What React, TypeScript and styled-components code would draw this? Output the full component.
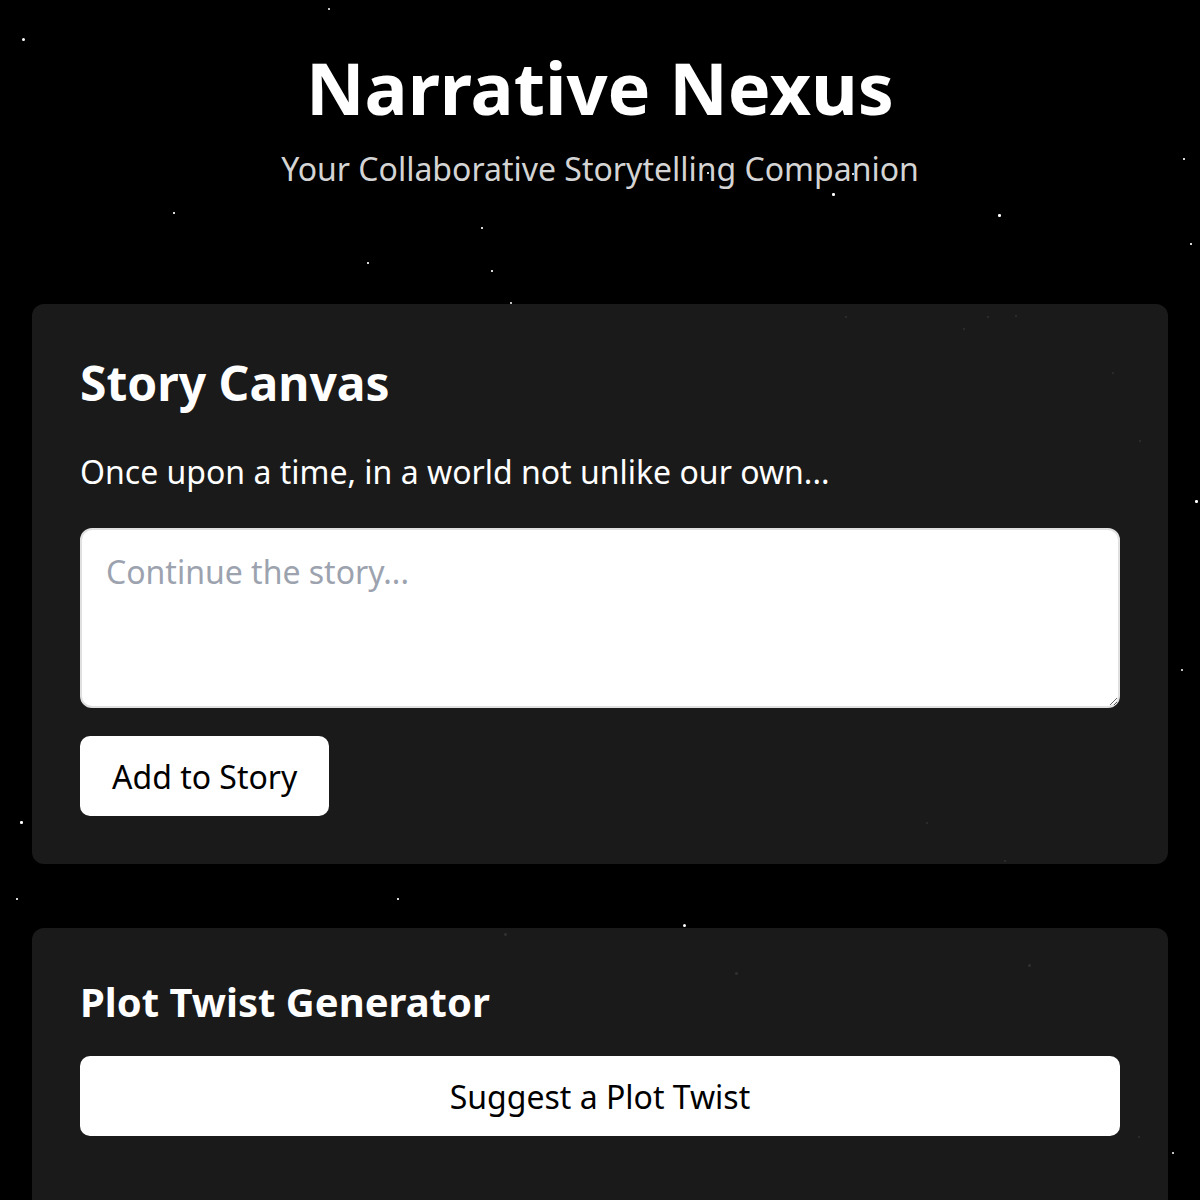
import React from 'react';
import styled, { createGlobalStyle } from 'styled-components';

const GlobalStyle = createGlobalStyle`
  html, body {
    margin: 0;
    padding: 0;
    background: #000;
    color: #fff;
    font-family: "Noto Sans", "Open Sans", sans-serif;
  }
  * {
    box-sizing: border-box;
  }
`;

type StarData = { x: number; y: number; s: number };

// scattered backdrop stars (x, y, size)
const stars: StarData[] = [
  { x: 22, y: 38, s: 3 },
  { x: 328, y: 8, s: 2 },
  { x: 173, y: 212, s: 1.5 },
  { x: 367, y: 262, s: 1.5 },
  { x: 481, y: 227, s: 1.5 },
  { x: 491, y: 270, s: 1.5 },
  { x: 510, y: 302, s: 2 },
  { x: 832, y: 193, s: 2.5 },
  { x: 852, y: 173, s: 1.5 },
  { x: 707, y: 172, s: 1.5 },
  { x: 998, y: 214, s: 2.5 },
  { x: 1183, y: 158, s: 1.5 },
  { x: 1190, y: 243, s: 1.5 },
  { x: 845, y: 316, s: 1.5 },
  { x: 963, y: 328, s: 1.5 },
  { x: 987, y: 316, s: 1.5 },
  { x: 1015, y: 315, s: 1.5 },
  { x: 1112, y: 372, s: 2 },
  { x: 1139, y: 440, s: 1.5 },
  { x: 1195, y: 500, s: 2.5 },
  { x: 1181, y: 669, s: 2 },
  { x: 926, y: 822, s: 1.5 },
  { x: 1004, y: 860, s: 1.5 },
  { x: 20, y: 821, s: 2.5 },
  { x: 16, y: 898, s: 1.5 },
  { x: 397, y: 898, s: 1.5 },
  { x: 683, y: 924, s: 3 },
  { x: 504, y: 933, s: 2.5 },
  { x: 735, y: 972, s: 2.5 },
  { x: 1028, y: 964, s: 2.5 },
  { x: 1138, y: 1136, s: 1.5 },
  { x: 1172, y: 1152, s: 2 },
];

const Page = styled.div`
  position: relative;
  min-height: 1200px;
  overflow: hidden;
  background: #000;
`;

const Sky = styled.div`
  position: absolute;
  inset: 0;
  z-index: 0;
  pointer-events: none;
`;

const Star = styled.span`
  position: absolute;
  border-radius: 50%;
  background: #fff;
`;

const Content = styled.main`
  position: relative;
  z-index: 1;
  display: flex;
  flex-direction: column;
  gap: 64px;
  padding: 44px 32px 64px;
`;

const Header = styled.header`
  display: flex;
  flex-direction: column;
  align-items: center;
  text-align: center;
  padding-bottom: 50px;
`;

const Title = styled.h1`
  margin: 0;
  font-size: 72px;
  font-weight: 700;
  line-height: 1.2;
  color: #fff;
`;

const Subtitle = styled.p`
  margin: 18px 0 0;
  font-size: 32px;
  line-height: 1.3;
  color: #d4d4d4;
`;

const Card = styled.section`
  display: flex;
  flex-direction: column;
  padding: 48px;
  border-radius: 12px;
  background: rgba(28, 28, 28, 0.92);
`;

const CardTitle = styled.h2<{ $small?: boolean }>`
  margin: 0 0 ${(p) => (p.$small ? '28px' : '34px')};
  font-size: ${(p) => (p.$small ? '40px' : '48px')};
  font-weight: 700;
  line-height: 1.3;
  color: #fff;
`;

const StoryText = styled.p`
  margin: 0 0 32px;
  font-size: 32px;
  line-height: 1.5;
  color: #fff;
`;

const StoryInput = styled.textarea`
  display: block;
  width: 100%;
  height: 180px;
  padding: 20px 24px;
  border: 2px solid #e0e0e0;
  border-radius: 12px;
  background: #fff;
  color: #111;
  font-family: "Noto Sans", "Open Sans", sans-serif;
  font-size: 32px;
  line-height: 1.4;
  resize: vertical;
  outline: none;

  &::placeholder {
    color: #9ca3af;
  }
`;

const Button = styled.button<{ $block?: boolean }>`
  align-self: ${(p) => (p.$block ? 'stretch' : 'flex-start')};
  height: 80px;
  padding: 0 32px;
  border: none;
  border-radius: 10px;
  background: #fff;
  color: #000;
  font-family: "Noto Sans", "Open Sans", sans-serif;
  font-size: 32px;
  cursor: pointer;
`;

const Actions = styled.div`
  display: flex;
  margin-top: 28px;
`;

// holds the suggested twist once one has been generated
const TwistOutput = styled.p`
  min-height: 48px;
  margin: 28px 0 0;
  font-size: 28px;
  line-height: 1.5;
  font-style: italic;
  color: #d4d4d4;
`;

function App() {
  const [draft, setDraft] = React.useState('');
  const [twist, setTwist] = React.useState('');

  return (
    <Page>
      <GlobalStyle />
      <Sky>
        {stars.map((st, i) => (
          <Star
            key={i}
            style={{ left: st.x, top: st.y, width: st.s, height: st.s }}
          />
        ))}
      </Sky>
      <Content>
        <Header>
          <Title>Narrative Nexus</Title>
          <Subtitle>Your Collaborative Storytelling Companion</Subtitle>
        </Header>

        <Card>
          <CardTitle>Story Canvas</CardTitle>
          <StoryText>Once upon a time, in a world not unlike our own...</StoryText>
          <StoryInput
            placeholder="Continue the story..."
            value={draft}
            onChange={(e) => setDraft(e.target.value)}
          />
          <Actions>
            <Button>Add to Story</Button>
          </Actions>
        </Card>

        <Card>
          <CardTitle $small>Plot Twist Generator</CardTitle>
          <Button $block onClick={() => setTwist('The narrator was a character all along.')}>
            Suggest a Plot Twist
          </Button>
          <TwistOutput>{twist}</TwistOutput>
        </Card>
      </Content>
    </Page>
  );
}

export default App;
